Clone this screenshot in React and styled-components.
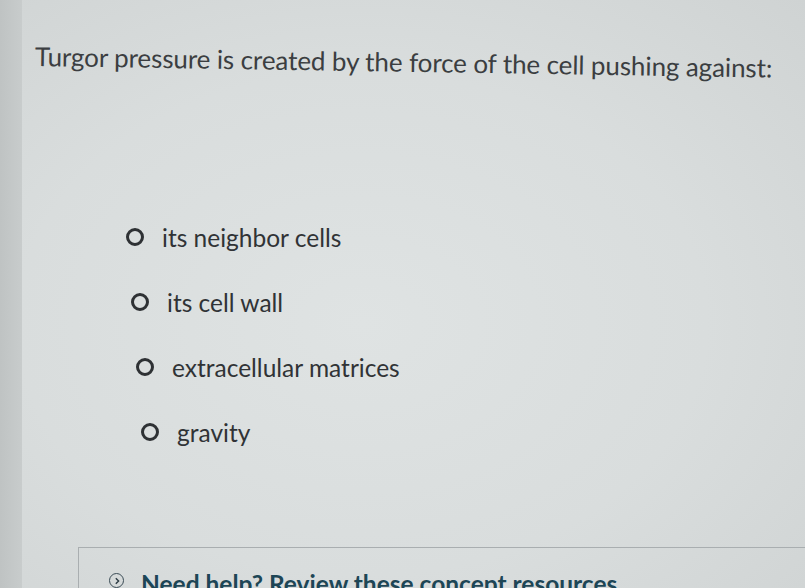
import React from "react";
import styled, { createGlobalStyle } from "styled-components";

const Global = createGlobalStyle`
  html, body { margin: 0; padding: 0; }
  body {
    width: 805px;
    height: 588px;
    overflow: hidden;
    font-family: "Lato", "Open Sans", sans-serif;
    background: #d9dddd;
  }
`;

const Screen = styled.div`
  display: flex;
  width: 805px;
  height: 588px;
  overflow: hidden;
  background:
    radial-gradient(ellipse at 45% 55%, #dfe3e3 0%, #d9dddd 55%, #cfd3d3 100%);
`;

const Bezel = styled.div`
  width: 22px;
  flex: 0 0 22px;
  background: linear-gradient(90deg, #bfc3c3 0%, #c8cccc 100%);
`;

const Main = styled.div`
  flex: 1;
  display: flex;
  flex-direction: column;
  padding-left: 13px;
  padding-top: 40px;
`;

const Title = styled.h1`
  margin: 0;
  font-size: 26px;
  font-weight: 400;
  color: #3b3e41;
  letter-spacing: -0.1px;
  white-space: nowrap;
  transform: rotate(0.9deg);
  transform-origin: left center;
`;

const Options = styled.div`
  display: flex;
  flex-direction: column;
  gap: 37px;
  margin-top: 151px;
  margin-left: 91px;
`;

const Option = styled.label`
  display: flex;
  align-items: center;
  gap: 18px;
  margin-left: ${(p) => p.$indent}px;
  font-size: 24.5px;
  color: #303336;
  height: 28px;
  cursor: pointer;
`;

const Radio = styled.span`
  box-sizing: border-box;
  width: 18px;
  height: 18px;
  border: 3.4px solid #2e3134;
  border-radius: 50%;
  flex: 0 0 auto;
`;

const HelpBox = styled.div`
  margin-top: auto;
  margin-left: 43px;
  height: 40px;
  border-top: 1.5px solid #a9aeb0;
  border-left: 1.5px solid #a9aeb0;
  display: flex;
  align-items: flex-end;
  padding-left: 30px;
`;

const HelpLink = styled.a`
  display: flex;
  align-items: center;
  gap: 17px;
  font-size: 24.5px;
  font-weight: 700;
  color: #1d4656;
  text-decoration: none;
  margin-bottom: -10px;
`;

const HelpIcon = styled.span`
  box-sizing: border-box;
  width: 15px;
  height: 15px;
  border: 1.6px solid #3a4b55;
  border-radius: 50%;
  display: flex;
  align-items: center;
  justify-content: center;
  flex: 0 0 auto;
  margin-top: -6px;
`;

const options = [
  "its neighbor cells",
  "its cell wall",
  "extracellular matrices",
  "gravity",
];

export default function App() {
  return (
    <>
      <Global />
      <Screen>
        <Bezel />
        <Main>
          <Title>Turgor pressure is created by the force of the cell pushing against:</Title>
          <Options>
            {options.map((o, i) => (
              <Option key={o} $indent={i * 5}>
                <Radio />
                {o}
              </Option>
            ))}
          </Options>
          <HelpBox>
            <HelpLink href="#">
              <HelpIcon>
                <svg width="8" height="8" viewBox="0 0 10 10">
                  <path d="M3.5 1.5 L7 5 L3.5 8.5" fill="none" stroke="#2e3d45" strokeWidth="1.8" />
                </svg>
              </HelpIcon>
              Need help? Review these concept resources.
            </HelpLink>
          </HelpBox>
        </Main>
      </Screen>
    </>
  );
}
